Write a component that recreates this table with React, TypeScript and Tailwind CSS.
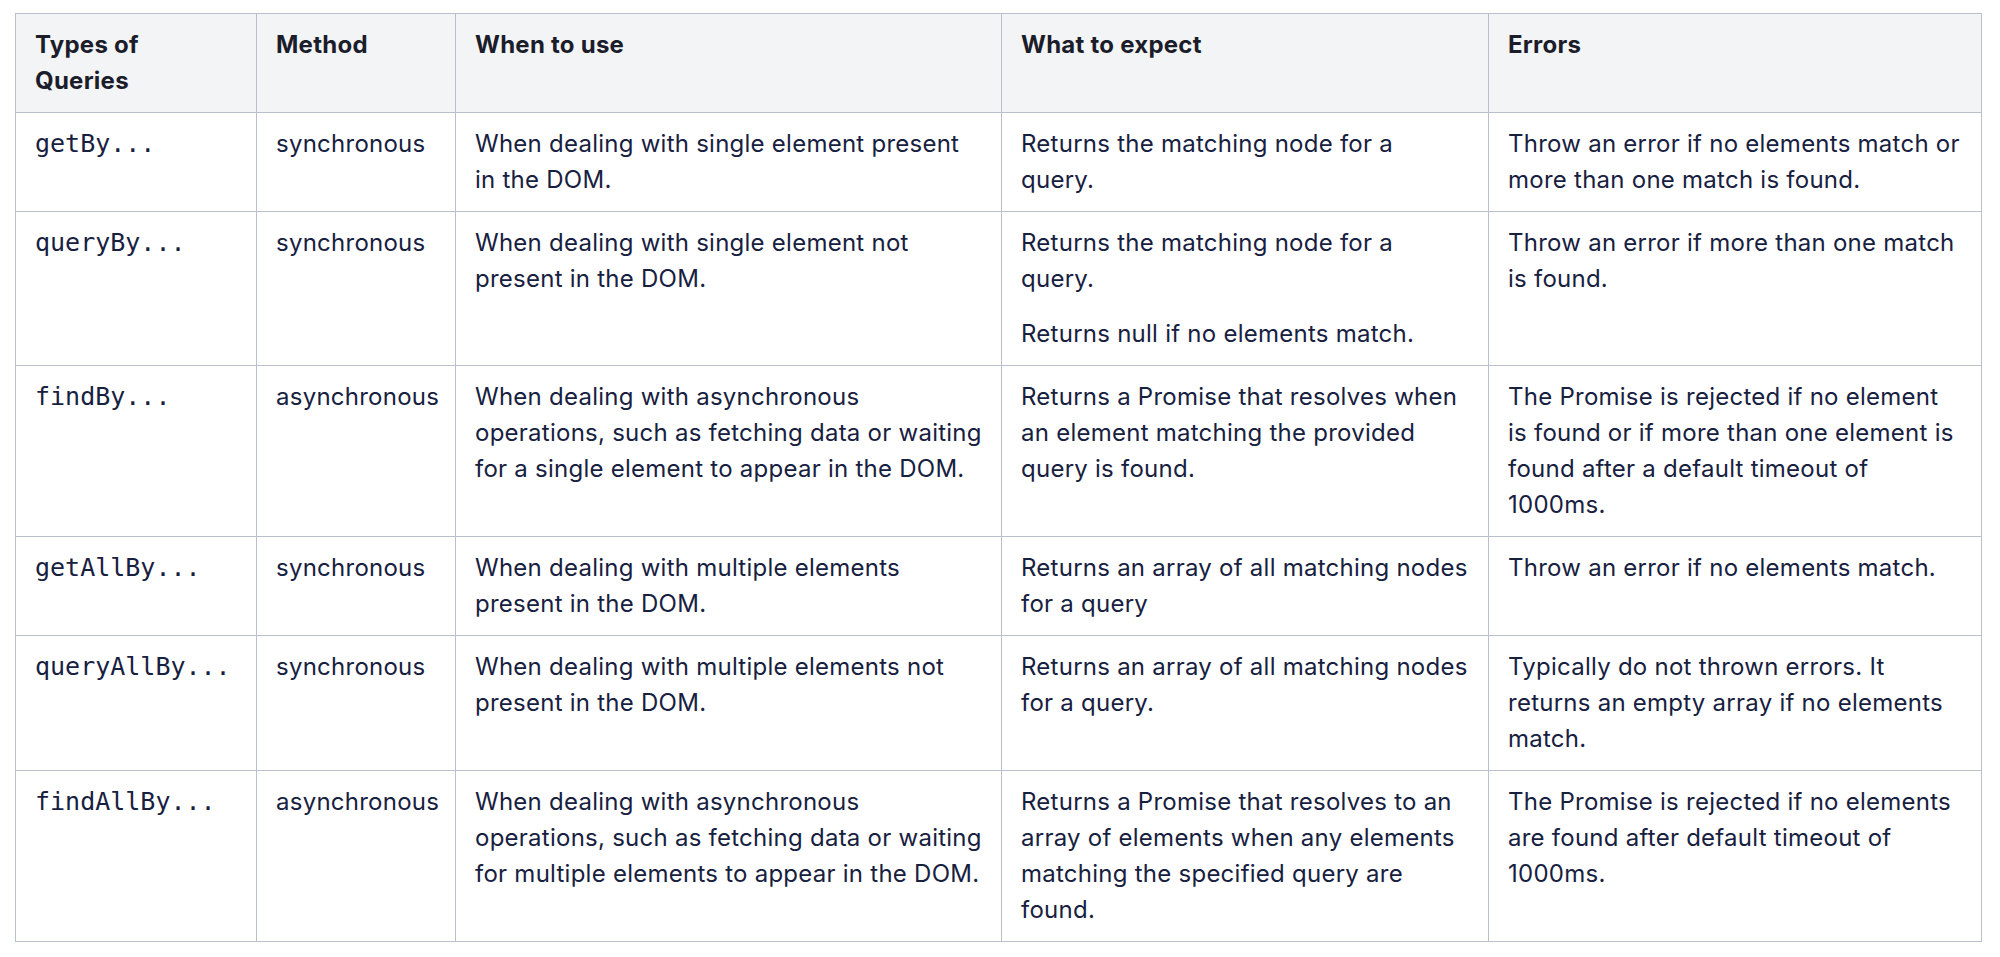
import React from "react";

type Row = {
  query: string;
  method: string;
  when: string;
  expect: string[];
  errors: string;
};

const ROWS: Row[] = [
  {
    query: "getBy...",
    method: "synchronous",
    when: "When dealing with single element present in the DOM.",
    expect: ["Returns the matching node for a query."],
    errors: "Throw an error if no elements match or more than one match is found.",
  },
  {
    query: "queryBy...",
    method: "synchronous",
    when: "When dealing with single element not present in the DOM.",
    expect: ["Returns the matching node for a query.", "Returns null if no elements match."],
    errors: "Throw an error if more than one match is found.",
  },
  {
    query: "findBy...",
    method: "asynchronous",
    when: "When dealing with asynchronous operations, such as fetching data or waiting for a single element to appear in the DOM.",
    expect: ["Returns a Promise that resolves when an element matching the provided query is found."],
    errors:
      "The Promise is rejected if no element is found or if more than one element is found after a default timeout of 1000ms.",
  },
  {
    query: "getAllBy...",
    method: "synchronous",
    when: "When dealing with multiple elements present in the DOM.",
    expect: ["Returns an array of all matching nodes for a query"],
    errors: "Throw an error if no elements match.",
  },
  {
    query: "queryAllBy...",
    method: "synchronous",
    when: "When dealing with multiple elements not present in the DOM.",
    expect: ["Returns an array of all matching nodes for a query."],
    errors: "Typically do not thrown errors. It returns an empty array if no elements match.",
  },
  {
    query: "findAllBy...",
    method: "asynchronous",
    when: "When dealing with asynchronous operations, such as fetching data or waiting for multiple elements to appear in the DOM.",
    expect: [
      "Returns a Promise that resolves to an array of elements when any elements matching the specified query are found.",
    ],
    errors: "The Promise is rejected if no elements are found after default timeout of 1000ms.",
  },
];

const HEADERS = ["Types of Queries", "Method", "When to use", "What to expect", "Errors"];
const COL_WIDTHS = ["w-[241px]", "w-[199px]", "w-[546px]", "w-[487px]", "w-[493px]"];

const cell = "border border-[#b9c0cc] px-[19px] py-[13px] align-top text-left";

export default function App() {
  return (
    <div className="min-h-screen bg-white pl-[15px] pt-[13px] font-['Inter','Liberation_Sans',sans-serif] text-[24px] leading-[36px] tracking-[0.25px] text-[#17213f]">
      <table className="w-[1967px] table-fixed border-collapse">
        <colgroup>
          {COL_WIDTHS.map((w, i) => (
            <col key={i} className={w} />
          ))}
        </colgroup>
        <thead>
          <tr className="bg-[#f3f4f6]">
            {HEADERS.map((h) => (
              <th key={h} className={`${cell} font-bold text-[#1b1d2b]`}>
                {h}
              </th>
            ))}
          </tr>
        </thead>
        <tbody>
          {ROWS.map((row) => (
            <tr key={row.query}>
              <td className={cell}>
                <code className="font-['DejaVu_Sans_Mono','Liberation_Mono',monospace] text-[25px] tracking-normal">
                  {row.query}
                </code>
              </td>
              <td className={cell}>{row.method}</td>
              <td className={cell}>{row.when}</td>
              <td className={cell}>
                {row.expect.map((p, i) => (
                  <p key={i} className={i > 0 ? "mt-[19px]" : ""}>
                    {p}
                  </p>
                ))}
              </td>
              <td className={cell}>{row.errors}</td>
            </tr>
          ))}
        </tbody>
      </table>
    </div>
  );
}
